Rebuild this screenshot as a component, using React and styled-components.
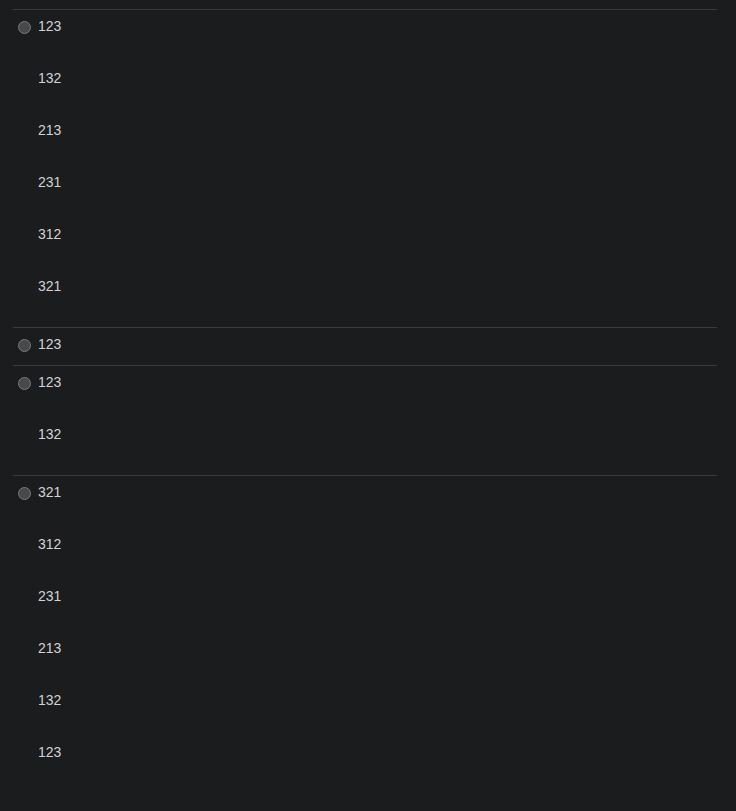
import React from 'react';
import styled, { createGlobalStyle } from 'styled-components';

const GlobalStyle = createGlobalStyle`
  html, body {
    margin: 0;
    padding: 0;
    background: #1b1c1e;
  }
  body {
    font-family: "Liberation Sans", Arial, sans-serif;
  }
`;

const Page = styled.div`
  min-height: 811px;
  padding: 9px 19px 0 13px;
  box-sizing: border-box;
  background: #1b1c1e;
`;

const Group = styled.div`
  border-top: 1px solid #3a3b3d;
  padding-bottom: ${({ $extra }) => ($extra ? '20px' : '0')};
`;

const Row = styled.label`
  display: flex;
  align-items: flex-start;
  height: ${({ $first }) => ($first ? '37px' : '38px')};
  margin-top: ${({ $first }) => ($first ? '0' : '14px')};
  padding-top: ${({ $first }) => ($first ? '8px' : '9px')};
  padding-left: ${({ $first }) => ($first ? '5px' : '25px')};
  box-sizing: border-box;
  color: #d2d2d2;
  font-size: 14px;
  line-height: 16px;
`;

const Radio = styled.span`
  width: 13px;
  height: 13px;
  margin-top: 3px;
  border-radius: 50%;
  box-sizing: border-box;
  border: 1px solid #7a7a7a;
  background: #48494b;
  margin-right: 7px;
  flex-shrink: 0;
`;

const groups = [
  ['123', '132', '213', '231', '312', '321'],
  ['123'],
  ['123', '132'],
  ['321', '312', '231', '213', '132', '123'],
];

export default function App() {
  return (
    <>
      <GlobalStyle />
      <Page>
        {groups.map((items, gi) => (
          <Group key={gi} $extra={items.length > 1}>
            {items.map((label, i) => (
              <Row key={i} $first={i === 0}>
                {i === 0 && <Radio />}
                {label}
              </Row>
            ))}
          </Group>
        ))}
      </Page>
    </>
  );
}
